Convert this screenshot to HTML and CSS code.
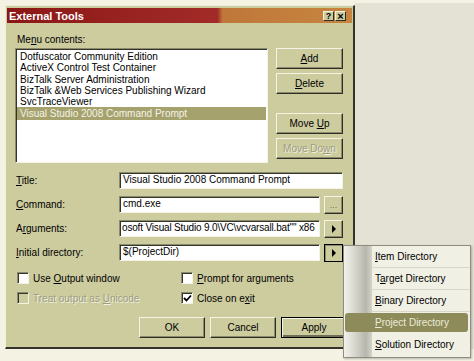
FILE: index.html
```html
<!DOCTYPE html>
<html lang="en">
<head>
    <meta charset="UTF-8">
    <meta name="viewport" content="width=device-width, initial-scale=1.0">
    <title>External Tools</title>
    <link rel="stylesheet" href="styles.css">
</head>
<body>
    <div class="desk">
        <div class="dialog">
            <div class="titlebar">
                <span class="caption">External Tools</span>
                <span class="cap-btn">?</span>
                <span class="cap-btn close">&#215;</span>
            </div>

            <div class="content">
                <div class="menu-label">Me<u>n</u>u contents:</div>

                <div class="top">
                    <div class="listbox">
                        <div class="item">Dotfuscator Community Edition</div>
                        <div class="item">ActiveX Control Test Container</div>
                        <div class="item">BizTalk Server Administration</div>
                        <div class="item">BizTalk &amp;Web Services Publishing Wizard</div>
                        <div class="item">SvcTraceViewer</div>
                        <div class="item selected">Visual Studio 2008 Command Prompt</div>
                    </div>
                    <div class="side-buttons">
                        <button class="btn"><u>A</u>dd</button>
                        <button class="btn"><u>D</u>elete</button>
                        <button class="btn gap">Move <u>U</u>p</button>
                        <button class="btn disabled">Move Do<u>w</u>n</button>
                    </div>
                </div>

                <div class="field-row">
                    <label><u>T</u>itle:</label>
                    <div class="input">Visual Studio 2008 Command Prompt</div>
                </div>
                <div class="field-row">
                    <label><u>C</u>ommand:</label>
                    <div class="input">cmd.exe</div>
                    <button class="small-btn dots">...</button>
                </div>
                <div class="field-row">
                    <label>A<u>r</u>guments:</label>
                    <div class="input tight">osoft Visual Studio 9.0\VC\vcvarsall.bat"" x86</div>
                    <button class="small-btn"><span class="arrow"></span></button>
                </div>
                <div class="field-row">
                    <label><u>I</u>nitial directory:</label>
                    <div class="input">$(ProjectDir)</div>
                    <button class="small-btn pressed"><span class="arrow"></span></button>
                </div>

                <div class="checks">
                    <div class="check"><span class="box"></span><span>Use <u>O</u>utput window</span></div>
                    <div class="check"><span class="box"></span><span><u>P</u>rompt for arguments</span></div>
                    <div class="check disabled"><span class="box"></span><span>Treat output as <u>U</u>nicode</span></div>
                    <div class="check"><span class="box"><svg width="9" height="9" viewBox="0 0 9 9"><path d="M1 4 L3.5 6.5 L8 1.5" fill="none" stroke="#000" stroke-width="1.8"/></svg></span><span>Close on e<u>x</u>it</span></div>
                </div>

                <div class="actions">
                    <button class="btn wide">OK</button>
                    <button class="btn wide">Cancel</button>
                    <button class="btn wide default">Apply</button>
                </div>
            </div>
        </div>
        <div class="side"></div>
    </div>

    <!-- Popup opened from the Initial directory arrow -->
    <div class="popup">
        <div class="menu-item"><u>I</u>tem Directory</div>
        <div class="menu-item">T<u>a</u>rget Directory</div>
        <div class="menu-item"><u>B</u>inary Directory</div>
        <div class="menu-item active"><span><u>P</u>roject Directory</span></div>
        <div class="menu-item last"><u>S</u>olution Directory</div>
    </div>
</body>
</html>
```

FILE: styles.css
```css
* {
    box-sizing: border-box;
}
body {
    margin: 0;
    width: 474px;
    height: 361px;
    overflow: hidden;
    position: relative;
    background-color: #f4f2e3; /* cream desktop */
    font-family: "Liberation Sans", Arial, sans-serif;
    font-size: 10px;
    color: #000;
}
u {
    text-decoration: underline;
    text-underline-offset: 1px;
}
.desk {
    display: flex;
    align-items: flex-start;
    padding: 3px 0 0 5px;
}
.dialog {
    width: 350px;
    height: 344px;
    margin-top: 2px;
    background-color: #cdcc9f;
    border-style: solid;
    border-width: 1px 2px 2px 1px;
    border-color: #eeeedc #34342c #34342c #eeeedc;
    padding: 2px 1px 0 1px;
}
.side {
    flex: 1;
    height: 346px;
    background-color: #e3e2d4;
}
.titlebar {
    height: 15px;
    display: flex;
    align-items: center;
    gap: 1px;
    padding: 0 6px 0 2px;
    background: linear-gradient(90deg, #8a1716 0%, #a22b28 61%, #bf773a 62.5%, #c7853f 100%);
}
.caption {
    flex: 1;
    color: #fff;
    font-weight: bold;
    font-size: 11px;
}
.cap-btn {
    width: 11px;
    height: 10px;
    background-color: #cdcc9f;
    border: 1px solid;
    border-color: #f4f4e4 #2e2e26 #2e2e26 #f4f4e4;
    font-size: 9px;
    font-weight: bold;
    line-height: 8px;
    text-align: center;
}
.cap-btn.close {
    font-size: 11px;
}
.content {
    padding: 11px 9px 0 8px;
}
.menu-label {
    height: 12px;
    line-height: 12px;
    padding-left: 2px;
    margin-bottom: 2px;
}
.top {
    display: flex;
    gap: 8px;
    height: 115px;
}
.listbox {
    width: 253px;
    height: 115px;
    background-color: #fff;
    border: 1px solid;
    border-color: #8c8b6c #f4f4e4 #f4f4e4 #8c8b6c;
    box-shadow: inset 1px 1px 0 #34342c;
    padding: 2px 1px 0 1px;
}
.item {
    height: 11.3px;
    line-height: 11px;
    padding-left: 3px;
    white-space: nowrap;
}
.item.selected {
    height: 13px;
    line-height: 13px;
    background-color: #a5a26e;
    color: #f4f3e6;
}
.side-buttons {
    width: 67px;
    display: flex;
    flex-direction: column;
    gap: 4px;
}
.btn {
    height: 21px;
    padding: 0;
    font-family: inherit;
    font-size: 10px;
    color: #000;
    background-color: #cdcc9f;
    border: 1px solid;
    border-color: #f4f4e4 #2e2e26 #2e2e26 #f4f4e4;
    box-shadow: inset -1px -1px 0 #8c8b6c;
}
.btn.gap {
    margin-top: 15px;
}
.btn.disabled {
    color: #9d9c7f;
    text-shadow: 1px 1px 0 #f2f2e2;
}
.field-row {
    display: flex;
    align-items: center;
    gap: 4px;
    height: 17px;
    margin-top: 7px;
}
.top + .field-row {
    margin-top: 9px;
}
.field-row label {
    width: 100px;
    padding-left: 1px;
}
.input {
    flex: 1;
    height: 17px;
    line-height: 14px;
    padding-left: 3px;
    white-space: nowrap;
    overflow: hidden;
    background-color: #fff;
    border: 1px solid;
    border-color: #8c8b6c #f4f4e4 #f4f4e4 #8c8b6c;
    box-shadow: inset 1px 1px 0 #34342c;
}
.input.tight {
    padding-left: 2px;
    letter-spacing: -0.17px;
}
.small-btn {
    width: 19px;
    height: 18px;
    padding: 0;
    display: flex;
    align-items: center;
    justify-content: center;
    background-color: #cdcc9f;
    border: 1px solid;
    border-color: #f4f4e4 #2e2e26 #2e2e26 #f4f4e4;
    box-shadow: inset -1px -1px 0 #8c8b6c;
    font-family: inherit;
    font-size: 9px;
    color: #6f6e56;
}
.small-btn.dots {
    align-items: flex-end;
    padding-bottom: 3px;
}
.small-btn.pressed {
    border-color: #000;
    box-shadow: inset 1px 1px 0 #8c8b6c;
}
.arrow {
    width: 0;
    height: 0;
    border-top: 4px solid transparent;
    border-bottom: 4px solid transparent;
    border-left: 4px solid #000;
}
.checks {
    display: grid;
    grid-template-columns: 164px 1fr;
    margin-top: 7px;
    padding-left: 2px;
}
.check {
    display: flex;
    align-items: center;
    gap: 4px;
    height: 20px;
}
.box {
    width: 12px;
    height: 12px;
    display: flex;
    align-items: center;
    justify-content: center;
    background-color: #fff;
    border: 1px solid;
    border-color: #8c8b6c #f4f4e4 #f4f4e4 #8c8b6c;
    box-shadow: inset 1px 1px 0 #34342c;
}
.check.disabled {
    color: #9d9c7f;
    text-shadow: 1px 1px 0 #f2f2e2;
}
.check.disabled .box {
    background-color: #cdcc9f;
}
.actions {
    display: flex;
    justify-content: flex-end;
    gap: 5px;
    margin-top: 9px;
    margin-right: -4px;
}
.btn.wide {
    width: 66px;
}
.btn.default {
    border-color: #000;
    box-shadow: inset 1px 1px 0 #f4f4e4, inset -2px -2px 0 #6f6e56;
}
.popup {
    position: absolute;
    left: 343px;
    top: 245px;
    width: 128px;
    height: 113px;
    border: 1px solid #8d8d82;
    background-color: #f1f0e5;
    background-image: linear-gradient(90deg, #f2f2ec 0px, #d9d9d1 10px, #b6b6ac 22px, #d4d4cb 28px, transparent 28px);
    box-shadow: 1px 1px 2px rgba(0, 0, 0, 0.25);
}
.menu-item {
    height: 22px;
    line-height: 21px;
    border-bottom: 1px solid #d8d7ca;
    margin-left: 28px;
    padding-left: 3px;
    white-space: nowrap;
}
.menu-item.last {
    border-bottom: none;
}
.menu-item.active {
    margin-left: 0;
    padding: 1px 2px 2px 1px;
    border-bottom: none;
    line-height: 19px;
}
.menu-item.active span {
    display: block;
    height: 19px;
    padding-left: 30px;
    border-radius: 3px;
    background-color: #8e8b5b;
    color: #ecebd9;
}
```
